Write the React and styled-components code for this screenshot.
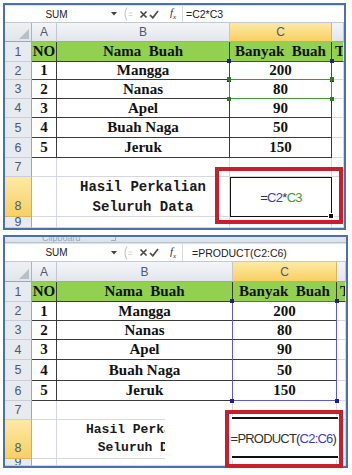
import React from 'react';
import styled, { createGlobalStyle } from 'styled-components';

const GlobalStyle = createGlobalStyle`
  html, body {
    margin: 0;
    padding: 0;
    background: #fff;
  }
  body {
    width: 352px;
    height: 475px;
    overflow: hidden;
  }
`;

const BLUE = '#3b3bd0';
const GREEN = '#3a9a3a';
const DARK = '#3a3a3a';

const tableRows = [
  ['1', 'Mangga', '200'],
  ['2', 'Nanas', '80'],
  ['3', 'Apel', '90'],
  ['4', 'Buah Naga', '50'],
  ['5', 'Jeruk', '150'],
];

const sheets = [
  {
    key: 'times',
    width: 339,
    colB: 173,
    colC: 102,
    strip: false,
    barHeight: 18,
    formulaPad: 3,
    rows: '19px 20px 18px 19px 19px 20px 20px 19px 40px 11px',
    labelLine: 20,
    labelSize: 14,
    selections: [
      { rows: '3', color: BLUE, handle: '#1d1d9a' },
      { rows: '4', color: GREEN, handle: '#2c7a2c' },
    ],
    redBox: { left: 210, top: 162, width: 128, height: 57 },
  },
  {
    key: 'product',
    width: 341,
    colB: 176,
    colC: 104,
    strip: true,
    barHeight: 19,
    formulaPad: 9,
    rows: '20px 20px 19px 19px 20px 21px 20px 19px 39px 7px',
    labelLine: 18,
    labelSize: 13,
    selections: [{ rows: '3 / 8', color: '#5a5ad6', handle: '#1d1d9a' }],
    redBox: { left: 220, top: 173, width: 118, height: 58 },
  },
];

const App = () => {
  return (
    <>
      <GlobalStyle />
      <Page>
        {sheets.map((s) => (
          <Sheet key={s.key} sheet={s} />
        ))}
      </Page>
    </>
  );
};

const Sheet = ({ sheet }) => {
  const isProduct = sheet.key === 'product';
  return (
    <Frame $width={sheet.width}>
      {sheet.strip && (
        <RibbonStrip>
          <RibbonLabel>Clipboard</RibbonLabel>
          <RibbonLauncher />
        </RibbonStrip>
      )}
      <FormulaBar $h={sheet.barHeight}>
        <NameBox>SUM</NameBox>
        <DropSlot>
          <svg width="6" height="4" viewBox="0 0 6 4">
            <path d="M0 0h6L3 3.5z" fill="#444" />
          </svg>
        </DropSlot>
        <Splitter>
          <svg width="12" height="16" viewBox="0 0 12 16">
            <path d="M5 1.5Q1 8 5 14.5" stroke="#c9cdd3" strokeWidth="1.2" fill="none" />
            <path d="M6.5 7h4M6.5 9.5h4" stroke="#d2d6dc" strokeWidth="1" />
          </svg>
        </Splitter>
        <BarIcon>
          <svg width="9" height="9" viewBox="0 0 9 9">
            <path d="M1.5 1.5L7.5 7.5M7.5 1.5L1.5 7.5" stroke="#4a4a4a" strokeWidth="1.7" />
          </svg>
        </BarIcon>
        <BarIcon>
          <svg width="10" height="9" viewBox="0 0 10 9">
            <path d="M1 5L3.8 7.8L9 1" stroke="#4a4a4a" strokeWidth="1.7" fill="none" />
          </svg>
        </BarIcon>
        <FxLabel>
          f<sub>x</sub>
        </FxLabel>
        <FormulaInput $pad={sheet.formulaPad}>
          {isProduct ? '=PRODUCT(C2:C6)' : '=C2*C3'}
        </FormulaInput>
      </FormulaBar>

      <Grid $colB={sheet.colB} $colC={sheet.colC} $rows={sheet.rows}>
        <Corner $r={1} $c={1} />
        {['A', 'B', 'C', ''].map((l, i) => (
          <ColHead key={i} $r={1} $c={i + 2} $active={l === 'C'}>
            {l}
          </ColHead>
        ))}
        {[1, 2, 3, 4, 5, 6, 7, 8, 9].map((n) => (
          <RowHead key={n} $r={n + 1} $c={1} $active={n === 8}>
            {n}
          </RowHead>
        ))}

        <TitleCell $r={2} $c={2}>NO</TitleCell>
        <TitleCell $r={2} $c={3}>Nama  Buah</TitleCell>
        <TitleCell $r={2} $c={4}>Banyak  Buah</TitleCell>
        <TitleCell $r={2} $c={5} $left>T</TitleCell>

        {tableRows.map((row, i) => (
          <React.Fragment key={row[0]}>
            {row.map((v, j) => (
              <DataCell key={j} $r={i + 3} $c={j + 2}>
                {v}
              </DataCell>
            ))}
            <Cell $r={i + 3} $c={5} />
          </React.Fragment>
        ))}

        {[2, 3, 4, 5].map((c) => (
          <Cell key={'r7' + c} $r={8} $c={c} />
        ))}

        <Cell $r={9} $c={2} />
        <LabelCell $r={9} $c={3} $line={sheet.labelLine} $size={sheet.labelSize}>
          Hasil Perkalian
          <br />
          Seluruh Data
        </LabelCell>
        {isProduct ? (
          <Cell $r={9} $c={4} />
        ) : (
          <EditCell $r={9} $c={4}>
            <Ref $color="#333">=</Ref>
            <Ref $color={BLUE}>C2</Ref>
            <Ref $color="#333">*</Ref>
            <Ref $color={GREEN}>C3</Ref>
            <FillHandle />
          </EditCell>
        )}
        <Cell $r={9} $c={5} />

        {[2, 3, 4, 5].map((c) => (
          <Cell key={'r9' + c} $r={10} $c={c} />
        ))}

        {sheet.selections.map((sel, i) => (
          <Selection key={i} $r={sel.rows} $c={4} $color={sel.color}>
            <Handle $color={sel.handle} $top $left />
            <Handle $color={sel.handle} $top />
            <Handle $color={sel.handle} $left />
            <Handle $color={sel.handle} />
          </Selection>
        ))}
      </Grid>

      {isProduct && (
        <InCellEditor>
          <Ref $color="#333">=PRODUCT(</Ref>
          <Ref $color={BLUE}>C2:C6</Ref>
          <Ref $color="#333">)</Ref>
        </InCellEditor>
      )}

      <RedBox style={sheet.redBox} />
    </Frame>
  );
};

// Styled Components
const Page = styled.div`
  display: flex;
  flex-direction: column;
  gap: 5px;
  padding: 3px 0 0 3px;
`;

const Frame = styled.div`
  position: relative;
  width: ${(p) => p.$width}px;
  border: 2px solid #4d70ad;
  background: #fff;
`;

const RibbonStrip = styled.div`
  position: relative;
  height: 6px;
  overflow: hidden;
  background: linear-gradient(#e4eaf2, #d9e1ec);
  border-bottom: 1px solid #b9c3d1;
  box-sizing: border-box;
`;

const RibbonLabel = styled.div`
  position: absolute;
  left: 37px;
  bottom: -1px;
  font-family: 'Liberation Sans', Arial, sans-serif;
  font-size: 9px;
  line-height: 10px;
  color: #9aa6b6;
`;

const RibbonLauncher = styled.div`
  position: absolute;
  left: 106px;
  bottom: 1px;
  width: 4px;
  height: 3px;
  border-right: 1px solid #a3aebd;
  border-bottom: 1px solid #a3aebd;
`;

const FormulaBar = styled.div`
  display: flex;
  align-items: center;
  height: ${(p) => p.$h}px;
  box-sizing: border-box;
  border-top: 1px solid #dde2e9;
  border-bottom: 1px solid #c2c9d3;
  background: #fff;
  font-family: 'Liberation Sans', Arial, sans-serif;
`;

const NameBox = styled.div`
  width: 103px;
  text-align: center;
  font-size: 10px;
  color: #222;
`;

const DropSlot = styled.div`
  width: 12px;
  display: flex;
  justify-content: center;
`;

const Splitter = styled.div`
  width: 16px;
  display: flex;
  justify-content: flex-start;
  padding-left: 2px;
`;

const BarIcon = styled.div`
  width: 10px;
  display: flex;
  justify-content: center;
  margin-right: 1px;
`;

const FxLabel = styled.div`
  width: 12px;
  margin-left: 10px;
  font-family: 'Liberation Serif', serif;
  font-style: italic;
  font-size: 11px;
  color: #333;

  sub {
    font-size: 7px;
  }
`;

const FormulaInput = styled.div`
  flex: 1;
  align-self: stretch;
  display: flex;
  align-items: center;
  border-left: 1px solid #d6dbe2;
  padding-left: ${(p) => p.$pad}px;
  font-size: 10.5px;
  color: #222;
`;

const Grid = styled.div`
  position: relative;
  display: grid;
  grid-template-columns: 27px 25px ${(p) => p.$colB}px ${(p) => p.$colC}px 1fr;
  grid-template-rows: ${(p) => p.$rows};
`;

const Cell = styled.div`
  grid-row: ${(p) => p.$r};
  grid-column: ${(p) => p.$c};
  box-sizing: border-box;
  display: flex;
  align-items: center;
  justify-content: center;
  overflow: hidden;
  white-space: pre;
  border-right: 1px solid #d5d9df;
  border-bottom: 1px solid #d5d9df;
  font-family: 'Liberation Serif', 'Times New Roman', serif;
  font-weight: bold;
  font-size: 15px;
  color: #111;
`;

const headerFace = `
  font-family: 'Liberation Sans', Arial, sans-serif;
  font-weight: normal;
  font-size: 12px;
  color: #4c5a6e;
`;

const activeFace = 'linear-gradient(#fde9a6, #f8d062)';

const Corner = styled(Cell)`
  position: relative;
  background: linear-gradient(#eef0f3, #e2e6eb);
  border-right: 1px solid #aab3bf;
  border-bottom: 1px solid #9ca7b5;

  &::after {
    content: '';
    position: absolute;
    right: 2px;
    bottom: 2px;
    border-left: 10px solid transparent;
    border-bottom: 10px solid #b9bfc7;
  }
`;

const ColHead = styled(Cell)`
  ${headerFace}
  background: ${(p) => (p.$active ? activeFace : 'linear-gradient(#f3f5f8, #e2e6ec)')};
  border-right: 1px solid ${(p) => (p.$active ? '#e0b458' : '#c0c7d1')};
  border-bottom: 1px solid ${(p) => (p.$active ? '#e2a83a' : '#9ca7b5')};
`;

const RowHead = styled(Cell)`
  ${headerFace}
  font-size: 12.5px;
  align-items: ${(p) => (p.$active ? 'flex-end' : 'center')};
  padding-bottom: ${(p) => (p.$active ? '3px' : '0')};
  background: ${(p) => (p.$active ? activeFace : '#e7eaef')};
  border-right: 1px solid ${(p) => (p.$active ? '#e2a83a' : '#9ca7b5')};
  border-bottom: 1px solid ${(p) => (p.$active ? '#e0b458' : '#c9cfd8')};
`;

const DataCell = styled(Cell)`
  border-right: 1px solid ${DARK};
  border-bottom: 1px solid ${DARK};
`;

const TitleCell = styled(DataCell)`
  background: #92d050;
  justify-content: ${(p) => (p.$left ? 'flex-start' : 'center')};
  padding-left: ${(p) => (p.$left ? '3px' : '0')};
  border-right: 1px solid ${(p) => (p.$left ? '#d5d9df' : DARK)};
`;

const LabelCell = styled(Cell)`
  font-family: 'Liberation Mono', 'Courier New', monospace;
  font-size: ${(p) => p.$size}px;
  line-height: ${(p) => p.$line}px;
  text-align: center;
  color: #1a1a1a;
`;

const EditCell = styled(Cell)`
  position: relative;
  overflow: visible;
  border: 1px solid #111;
  font-family: 'Liberation Sans', Arial, sans-serif;
  font-weight: normal;
  font-size: 13px;
  letter-spacing: -0.7px;
  padding-top: 1px;
`;

const FillHandle = styled.span`
  position: absolute;
  right: -3px;
  bottom: -3px;
  width: 4px;
  height: 4px;
  background: #111;
  border: 1px solid #fff;
`;

const Ref = styled.span`
  color: ${(p) => p.$color};
`;

const Selection = styled.div`
  grid-row: ${(p) => p.$r};
  grid-column: ${(p) => p.$c};
  position: relative;
  margin: -1px 0 0 -1px;
  border: 1px solid ${(p) => p.$color};
  pointer-events: none;
  z-index: 2;
`;

const Handle = styled.span`
  position: absolute;
  width: 4px;
  height: 4px;
  background: ${(p) => p.$color};
  ${(p) => (p.$top ? 'top: -3px;' : 'bottom: -3px;')}
  ${(p) => (p.$left ? 'left: -3px;' : 'right: -3px;')}
`;

const InCellEditor = styled.div`
  position: absolute;
  left: 160px;
  top: 179px;
  width: 173px;
  height: 44px;
  box-sizing: border-box;
  display: flex;
  align-items: center;
  justify-content: flex-end;
  padding-right: 2px;
  background: #fff;
  font-family: 'Liberation Sans', Arial, sans-serif;
  font-size: 13px;
  letter-spacing: -0.8px;
  z-index: 3;

  &::before,
  &::after {
    content: '';
    position: absolute;
    left: 67px;
    right: 0;
    height: 2px;
    background: #111;
  }
  &::before {
    top: 1px;
  }
  &::after {
    bottom: 2px;
  }
`;

const RedBox = styled.div`
  position: absolute;
  box-sizing: border-box;
  border: 4px solid #c91f2c;
  pointer-events: none;
  z-index: 4;
`;

export default App;
